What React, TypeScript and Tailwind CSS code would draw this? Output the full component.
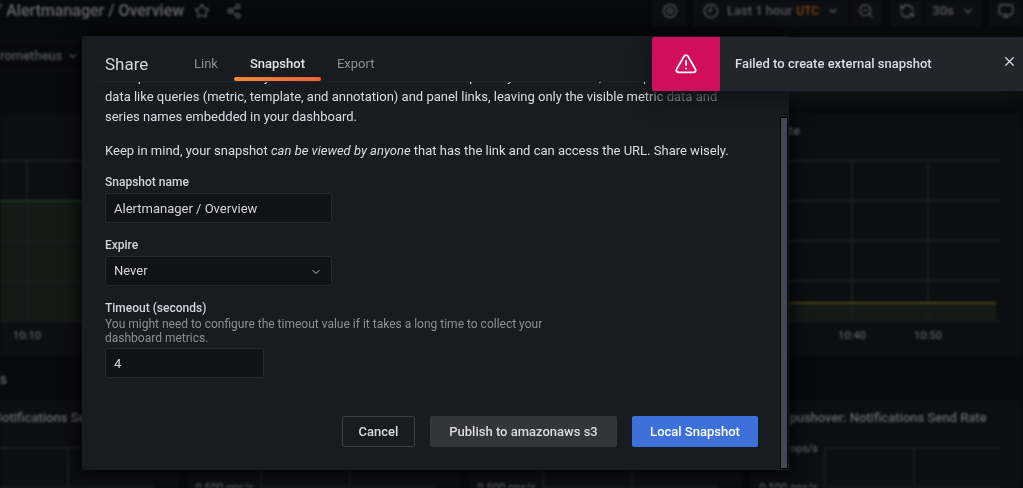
import { ChevronDown, Clock9, Monitor, RefreshCcw, Share2, Star, X, ZoomOut } from 'lucide-react';
import { useState } from 'react';
import type { ReactNode } from 'react';

type Series = { y: number; end: number; stroke: string };

type ChartProps = {
  left: number;
  right: number;
  rows: number[];
  cols: number[];
  xLabels?: string[];
  yLabels?: string[];
  series?: Series;
};

function CogIcon() {
  return (
    <svg width="16" height="16" viewBox="0 0 24 24" fill="none" stroke="currentColor" strokeWidth="2" aria-hidden="true">
      <path d="M3.85 8.62a4 4 0 0 1 4.78-4.77 4 4 0 0 1 6.74 0 4 4 0 0 1 4.78 4.78 4 4 0 0 1 0 6.74 4 4 0 0 1-4.77 4.78 4 4 0 0 1-6.75 0 4 4 0 0 1-4.78-4.77 4 4 0 0 1 0-6.76Z" />
      <circle cx="12" cy="12" r="3.5" />
    </svg>
  );
}

function WarningIcon() {
  return (
    <svg width="24" height="24" viewBox="0 0 24 24" fill="none" stroke="currentColor" strokeWidth="1.8" strokeLinecap="round" strokeLinejoin="round" aria-hidden="true">
      <path d="M10.1 4.2 2.6 17.1a2.1 2.1 0 0 0 1.8 3.2h15.2a2.1 2.1 0 0 0 1.8-3.2L13.9 4.2a2.2 2.2 0 0 0-3.8 0Z" />
      <path d="M12 8.8v4.2" />
      <path d="M12 16.4v.1" />
    </svg>
  );
}

function Chart({ left, right, rows, cols, xLabels = [], yLabels = [], series }: ChartProps) {
  const top = rows[0];
  const bottom = rows[rows.length - 1];
  return (
    <svg className="block h-[216px] w-full" fontSize="11" fontWeight="500" fill="#5c5d63" aria-hidden="true">
      {series && <rect x={left} y={series.y} width={series.end - left} height={bottom - series.y} fill="#141a15" />}
      {rows.map((y) => (
        <line key={y} x1={left} x2={right} y1={y} y2={y} stroke="#1b1c1f" strokeWidth="2" />
      ))}
      {cols.map((x) => (
        <line key={x} x1={x} x2={x} y1={top} y2={bottom} stroke="#1b1c1f" strokeWidth="2" />
      ))}
      {series && <line x1={left} x2={series.end} y1={series.y} y2={series.y} stroke={series.stroke} strokeWidth="2" />}
      {xLabels.map((label, i) => (
        <text key={label} x={cols[i]} y={bottom + 18} textAnchor="middle">{label}</text>
      ))}
      {yLabels.map((label, i) => (
        <text key={label} x={left - 7} y={rows[i] + 4} textAnchor="end">{label}</text>
      ))}
    </svg>
  );
}

function Panel({ title, children }: { title: string; children: ReactNode }) {
  return (
    <section className="h-[244px] overflow-hidden bg-[#0d0e12]">
      <h3 className="flex h-7 items-end justify-center text-[13px] leading-5 font-medium text-[#66676e]">{title}</h3>
      {children}
    </section>
  );
}

const toolButton = 'flex h-8 items-center justify-center bg-[#0d0e12]';

function Dashboard() {
  return (
    <div className="h-full overflow-hidden text-[#55565c] blur-[1px]">
      <header className="flex h-[21px] items-center justify-between">
        <div className="flex items-center">
          <h1 className="-ml-1 text-[16px] leading-6 font-medium whitespace-pre text-[#66676e]">/ Alertmanager / Overview</h1>
          <button type="button" className="ml-2.5" aria-label="Mark as favorite"><Star size={16} /></button>
          <button type="button" className="ml-4" aria-label="Share dashboard"><Share2 size={16} /></button>
        </div>
        <div className="flex items-center text-[13px] font-medium">
          <button type="button" className={`${toolButton} mr-1.5 w-[35px]`} aria-label="Dashboard settings"><CogIcon /></button>
          <button type="button" className={`${toolButton} w-[156px] gap-2`}>
            <Clock9 size={16} />
            <span>Last 1 hour</span>
            <span className="-ml-1 text-xs text-[#7f450f]">UTC</span>
            <ChevronDown size={12} strokeWidth={3} />
          </button>
          <button type="button" className={`${toolButton} mr-2 ml-px w-8`} aria-label="Zoom out"><ZoomOut size={16} /></button>
          <button type="button" className={`${toolButton} mr-px w-[34px]`} aria-label="Refresh"><RefreshCcw size={16} /></button>
          <button type="button" className={`${toolButton} mr-2 w-14 gap-2`}>30s <ChevronDown size={12} strokeWidth={3} /></button>
          <button type="button" className={`${toolButton} w-[34px]`} aria-label="Cycle view mode"><Monitor size={16} /></button>
        </div>
      </header>

      <button type="button" className="mt-5 flex h-[30px] w-24 items-center gap-1 border-y border-[#15161a] text-[13px] font-medium">
        rometheus <ChevronDown size={12} strokeWidth={3} />
      </button>

      <div className="mt-[42px] -mr-0.5 -ml-[95px]">
        <div className="grid grid-cols-2 gap-2">
          <Panel title="Alerts">
            <Chart left={60} right={540} rows={[20, 60, 100, 140, 180]} cols={[122, 198]} xLabels={['10:10']} series={{ y: 60, end: 540, stroke: '#20361f' }} />
          </Panel>
          <Panel title="Alerts receive rate">
            <Chart left={60} right={531} rows={[20, 60, 100, 140, 180]} cols={[383, 459]} xLabels={['10:40', '10:50']} series={{ y: 162, end: 527, stroke: '#4a4016' }} />
          </Panel>
        </div>
        <h2 className="h-[43px] pt-2.5 pl-2 text-sm leading-6 font-medium">
          <span className="block w-[94px] text-right text-[#66676e]">Notifications</span>
        </h2>
        <div className="grid grid-cols-4 gap-2">
          {['email', 'opsgenie', 'pagerduty', 'pushover'].map((name) => (
            <Panel key={name} title={`${name}: Notifications Send Rate`}>
              <Chart left={74} right={249} rows={[20, 59, 98]} cols={[74, 163]} yLabels={['1 ops/s', '0.500 ops/s']} />
            </Panel>
          ))}
        </div>
      </div>
    </div>
  );
}

const fieldBox = 'block h-[30px] rounded-xs border border-[#26282d] bg-[#111217] px-2 text-[13px] text-[#d5d3e0] outline-none';
const fieldLabel = 'block text-[12px] leading-4 font-medium text-[#d5d3e0]';

function ShareModal() {
  const [name, setName] = useState('Alertmanager / Overview');
  const [expire, setExpire] = useState('Never');
  const [timeout, setTimeoutValue] = useState('4');

  return (
    <div role="dialog" aria-label="Share" className="relative w-full max-w-[707px] rounded-xs bg-[#181b1f] shadow-[0_0_20px_#000]">
      <header className="mx-4 flex h-[46px] border-b border-[#212327]">
        <h2 className="w-20 pt-4 pl-[7px] text-[17px] leading-6 text-[#d5d3e0]">Share</h2>
        <nav className="flex text-[13px] leading-6 text-[#8e8e99]">
          <a href="#link" className="px-4 pt-4">Link</a>
          <a href="#snapshot" aria-current="page" className="relative px-4 pt-4 font-medium text-[#e4e3ec]">
            Snapshot
            <span className="absolute inset-x-0 bottom-0 h-1 rounded-xs bg-linear-to-r from-[#ff8833] to-[#f55f3e]" />
          </a>
          <a href="#export" className="px-4 pt-4">Export</a>
        </nav>
      </header>

      <div className="overflow-hidden pr-[31px] pb-[23px] pl-[23px]">
        <div className="-mt-[15px] text-[13px] leading-5 text-[#dddbe8]">
          <p className="mb-3.5">
            A snapshot is an instant way to share an interactive dashboard publicly. When created, we strip sensitive<br />
            data like queries (metric, template, and annotation) and panel links, leaving only the visible metric data and<br />
            series names embedded in your dashboard.
          </p>
          <p>
            Keep in mind, your snapshot <em>can be viewed by anyone</em> that has the link and can access the URL. Share wisely.
          </p>
        </div>

        <form onSubmit={(e) => e.preventDefault()}>
          <div className="mt-[13px]">
            <label htmlFor="snapshot-name" className={`${fieldLabel} mb-[3px]`}>Snapshot name</label>
            <input id="snapshot-name" value={name} onChange={(e) => setName(e.target.value)} className={`${fieldBox} w-[227px]`} />
          </div>
          <div className="mt-3.5">
            <label htmlFor="expire" className={`${fieldLabel} mb-[3px]`}>Expire</label>
            <div className="relative w-[227px]">
              <select id="expire" value={expire} onChange={(e) => setExpire(e.target.value)} className={`${fieldBox} w-full appearance-none`}>
                <option>Never</option>
                <option>1 Hour</option>
                <option>1 Day</option>
                <option>7 Days</option>
              </select>
              <ChevronDown size={12} className="pointer-events-none absolute top-2.5 right-2.5 text-[#c4c3cc]" aria-hidden="true" />
            </div>
          </div>
          <div className="mt-3.5">
            <label htmlFor="timeout" className={fieldLabel}>Timeout (seconds)</label>
            <p className="mt-px mb-[3px] max-w-[450px] text-[12px] leading-[14px] text-[#8e8e99]">
              You might need to configure the timeout value if it takes a long time to collect your dashboard metrics.
            </p>
            <input id="timeout" value={timeout} onChange={(e) => setTimeoutValue(e.target.value)} className={`${fieldBox} w-[159px]`} />
          </div>

          <div className="mt-[38px] flex justify-end gap-[15px] text-[13px] font-medium text-[#dddbe8]">
            <button type="button" className="h-[31px] w-[73px] rounded-xs border border-[#3b3d42]">Cancel</button>
            <button type="button" className="h-[31px] w-[187px] rounded-xs bg-[#33353a]">Publish to amazonaws s3</button>
            <button type="submit" className="h-[31px] w-[126px] rounded-xs bg-[#3d71d9] text-white">Local Snapshot</button>
          </div>
        </form>
      </div>

      {/* scrollbar thumb */}
      <span className="absolute top-[82px] right-0.5 bottom-0.5 w-1.5 bg-[#464754] ring-1 ring-black" />
    </div>
  );
}

function Toast() {
  return (
    <div role="alert" className="flex h-[54px] w-[371px] bg-[#22252b] shadow-[0_10px_20px_#121416]">
      <div className="grid w-[68px] place-items-center rounded-l-xs bg-[#d10e5c] text-white"><WarningIcon /></div>
      <p className="flex-1 self-center pl-[15px] text-[13px] font-medium text-[#dddbe8]">Failed to create external snapshot</p>
      <button type="button" className="mt-4 mr-1.5 h-4 text-[#dddbe8]" aria-label="Close alert"><X size={15} /></button>
    </div>
  );
}

export default function App() {
  return (
    <div className="relative h-screen overflow-hidden bg-[#08090b] font-[Roboto,sans-serif]">
      <Dashboard />
      <div className="absolute inset-0 pt-9 pr-4 pl-[82px]">
        <ShareModal />
      </div>
      <div className="absolute top-[37px] right-0">
        <Toast />
      </div>
    </div>
  );
}
